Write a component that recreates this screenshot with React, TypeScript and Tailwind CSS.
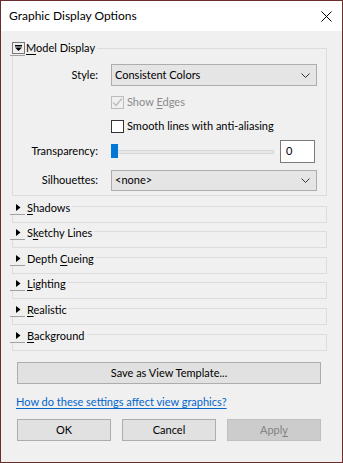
import React from 'react';

// Access-key underline
const K = ({ children }: { children: React.ReactNode }) => (
  <span className="underline decoration-1 underline-offset-[2px]">{children}</span>
);

function Chevron() {
  return (
    <svg width="9" height="5" viewBox="0 0 9 5" className="shrink-0">
      <path d="M0.5 0.5 L4.5 4.5 L8.5 0.5" fill="none" stroke="#333" strokeWidth="1" />
    </svg>
  );
}

function Select({ value, h }: { value: string; h: string }) {
  return (
    <div className={`flex ${h} flex-1 items-center justify-between border border-[#adadad] bg-[#e5e5e5] pl-[3px] pr-[6px]`}>
      <span>{value}</span>
      <Chevron />
    </div>
  );
}

function Checkbox({ checked, disabled }: { checked?: boolean; disabled?: boolean }) {
  return (
    <div
      className={
        disabled
          ? 'flex h-[13px] w-[13px] shrink-0 items-center justify-center border border-[#bcbcbc] bg-[#f0f0f0]'
          : 'flex h-[13px] w-[13px] shrink-0 items-center justify-center border border-[#333333] bg-white'
      }
    >
      {checked && (
        <svg width="11" height="11" viewBox="0 0 11 11">
          <path d="M1 5.5 L4 8.5 L10 1.5" fill="none" stroke={disabled ? '#bcbcbc' : '#000'} strokeWidth="1.3" />
        </svg>
      )}
    </div>
  );
}

function CollapsedGroup({ label, mt }: { label: React.ReactNode; mt: string }) {
  return (
    <div className={`flex flex-col ${mt}`}>
      <div className="flex h-[15px]">
        <div className="h-[15px] w-[15px] shrink-0 border-b border-[#a0a0a0] pl-[6px] pt-[4px]">
          <svg width="5" height="7" viewBox="0 0 5 7" className="block">
            <path d="M0 0 L4.5 3.5 L0 7 Z" fill="#000" />
          </svg>
        </div>
        <span className="ml-[2px] leading-[15px]">{label}</span>
        <div className="ml-[2px] mt-[6px] flex-1 border-r border-t border-[#dcdcdc]" />
      </div>
      <div className="ml-[2px] h-[8px] border-x border-b border-[#dcdcdc]" />
    </div>
  );
}

function ModelDisplay() {
  return (
    <div className="flex flex-col">
      <div className="flex h-[16px]">
        <div className="h-[16px] w-[15px] shrink-0 border-b border-[#a0a0a0] pl-[2px] pt-[2px]">
          <svg width="13" height="12" viewBox="0 0 13 12" className="block">
            <rect x="0.5" y="0.5" width="12" height="11" fill="none" stroke="#000" strokeDasharray="1 1" />
            <rect x="3" y="3" width="7" height="1.5" fill="#000" />
            <path d="M3 5.5 L10 5.5 L6.5 9 Z" fill="#000" />
          </svg>
        </div>
        <span className="ml-[1px] leading-[15px]">
          <K>M</K>odel Display
        </span>
        <div className="ml-[2px] mt-[8px] flex-1 border-r border-t border-[#dcdcdc]" />
      </div>
      <div className="ml-[2px] flex flex-col border-x border-b border-[#dcdcdc] pb-[4px] pr-[9px] pt-[8px]">
        <div className="flex h-[22px] items-center">
          <span className="w-[85px] text-right">Style:</span>
          <div className="ml-[13px] flex flex-1">
            <Select value="Consistent Colors" h="h-[22px]" />
          </div>
        </div>
        <div className="mt-[10px] flex h-[13px] items-center pl-[98px]">
          <Checkbox checked disabled />
          <span className="ml-[3px] text-[#8a8a8a]">
            Show <K>E</K>dges
          </span>
        </div>
        <div className="mt-[11px] flex h-[13px] items-center pl-[98px]">
          <Checkbox />
          <span className="ml-[3px]">Smooth lines with anti-aliasing</span>
        </div>
        <div className="mt-[7px] flex h-[23px] items-center">
          <span className="w-[85px] text-right">Transparency:</span>
          <div className="relative ml-[13px] flex h-[23px] w-[163px] items-center">
            <div className="h-[4px] w-full border border-[#d6d6d6] bg-[#e7e7e7]" />
            <div className="absolute left-0 top-[4px] h-[14px] w-[7px] bg-[#0078d7]" />
          </div>
          <div className="ml-[6px] flex h-[23px] w-[35px] items-center border border-[#7a7a7a] bg-white pl-[5px]">
            0
          </div>
        </div>
        <div className="mt-[7px] flex h-[21px] items-center">
          <span className="w-[85px] text-right">Silhouettes:</span>
          <div className="ml-[13px] flex flex-1">
            <Select value="<none>" h="h-[21px]" />
          </div>
        </div>
      </div>
    </div>
  );
}

function Button({ children, disabled, w }: { children: React.ReactNode; disabled?: boolean; w: string }) {
  return (
    <div
      className={
        disabled
          ? `flex h-[22px] ${w} items-center justify-center border border-[#bfbfbf] bg-[#cccccc] text-[#838383]`
          : `flex h-[22px] ${w} items-center justify-center border border-[#adadad] bg-[#e1e1e1]`
      }
    >
      {children}
    </div>
  );
}

export default function App() {
  return (
    <div className="flex h-[463px] w-[343px] flex-col border border-[#6a2c2c] bg-[#f0f0f0] font-[Lato,'Noto_Sans',sans-serif] text-[11px] text-black">
      <div className="flex h-[30px] shrink-0 items-center justify-between bg-white pl-[8px] pr-[10px]">
        <span className="text-[12px]">Graphic Display Options</span>
        <svg width="11" height="11" viewBox="0 0 11 11">
          <path d="M0.5 0.5 L10.5 10.5 M10.5 0.5 L0.5 10.5" stroke="#000" strokeWidth="1" />
        </svg>
      </div>

      <div className="ml-[9px] mt-[9px] flex w-[317px] flex-col">
        <ModelDisplay />
        <CollapsedGroup mt="mt-[4px]" label={<><K>S</K>hadows</>} />
        <CollapsedGroup mt="mt-[2px]" label={<>S<K>k</K>etchy Lines</>} />
        <CollapsedGroup mt="mt-[3px]" label={<>Depth <K>C</K>ueing</>} />
        <CollapsedGroup mt="mt-[2px]" label={<><K>L</K>ighting</>} />
        <CollapsedGroup mt="mt-[3px]" label={<><K>R</K>ealistic</>} />
        <CollapsedGroup mt="mt-[3px]" label={<><K>B</K>ackground</>} />
      </div>

      <div className="ml-[16px] mt-[11px]">
        <Button w="w-[304px]">Save as View Template...</Button>
      </div>

      <div className="ml-[15px] mt-[10px] h-[16px] leading-[16px] text-[#0066cc] underline decoration-1 underline-offset-[2px]">
        How do these settings affect view graphics?
      </div>

      <div className="ml-[16px] mt-[9px] flex gap-[11px]">
        <Button w="w-[94px]">OK</Button>
        <Button w="w-[94px]">Cancel</Button>
        <Button w="w-[94px]" disabled>
          Appl<K>y</K>
        </Button>
      </div>
    </div>
  );
}
